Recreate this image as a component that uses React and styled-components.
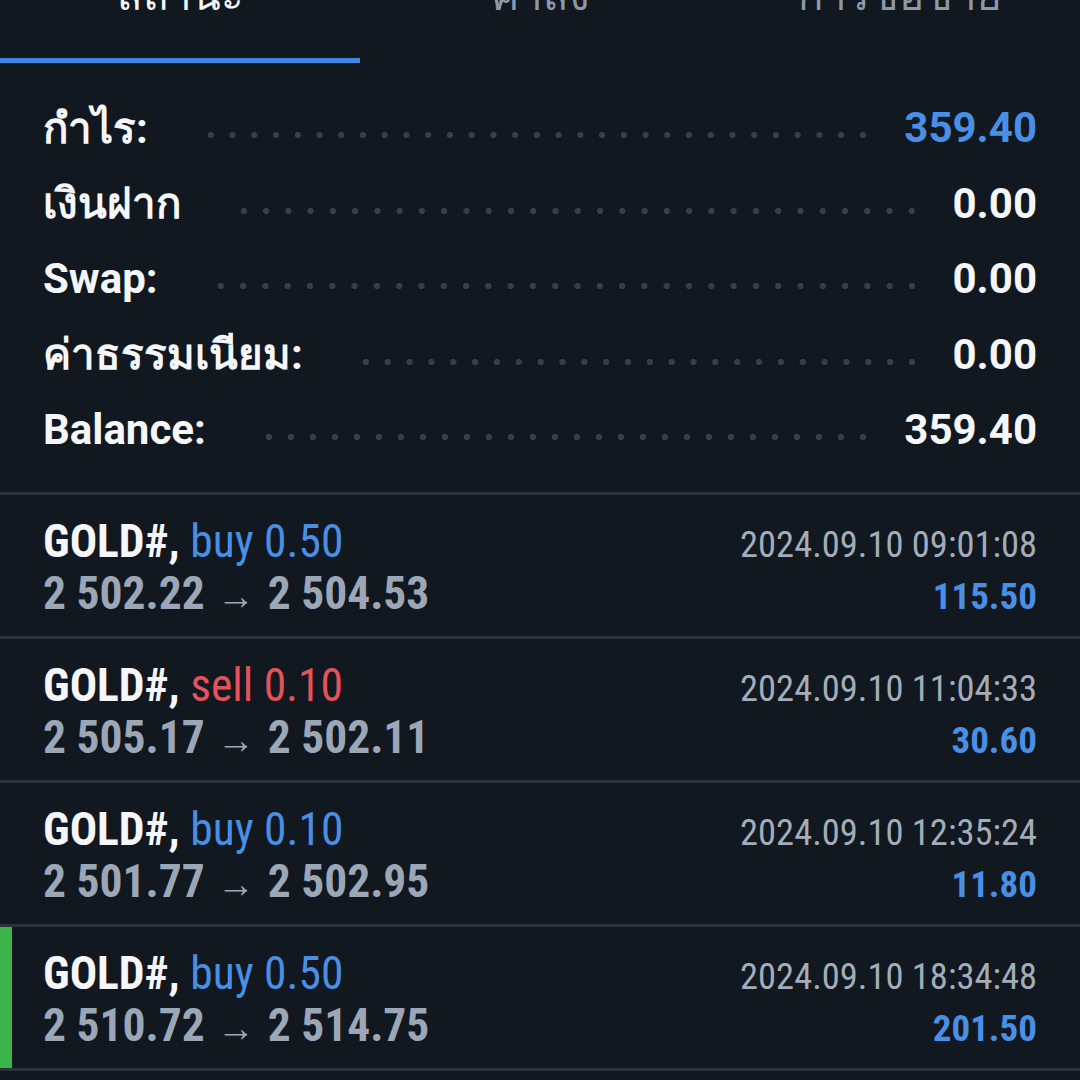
import React from "react";
import styled, { createGlobalStyle, css } from "styled-components";

const GlobalStyle = createGlobalStyle`
  html, body {
    margin: 0;
    padding: 0;
    background: #121820;
    overflow: hidden;
  }
  * { box-sizing: border-box; }
`;

const Screen = styled.div`
  width: 1080px;
  margin-top: -56px;
  background: #121820;
  font-family: Roboto, "Noto Sans", sans-serif;
  color: #f4f6f9;
`;

const TabBar = styled.div`
  display: grid;
  grid-template-columns: repeat(3, 1fr);
  height: 119px;
`;

const Tab = styled.div`
  display: flex;
  justify-content: center;
  align-items: flex-start;
  padding-top: 28px;
  font-size: 42px;
  line-height: 48px;
  font-weight: 500;
  color: ${(p) => (p.$active ? "#f4f6f9" : "#8d98a8")};
  border-bottom: 5px solid ${(p) => (p.$active ? "#3d86e6" : "transparent")};
`;

const Summary = styled.div`
  padding: 27px 43px 24px;
  border-bottom: 3px solid #2b3341;
`;

const SumRow = styled.div`
  display: flex;
  align-items: center;
  height: 75.5px;
  font-size: 42px;
  font-weight: 700;
`;

const Label = styled.span`
  white-space: nowrap;
`;

const Leader = styled.span`
  flex: 1;
  height: 8px;
  margin: 15px 30px 0 52px;
  background-image: radial-gradient(circle, #383f4b 2.8px, transparent 3.4px);
  background-size: 21.7px 8px;
  background-repeat: space no-repeat;
`;

const Value = styled.span`
  color: ${(p) => (p.$accent ? "#4a8fe6" : "#f4f6f9")};
`;

const TradeRow = styled.div`
  padding: 21px 43px 0;
  height: 144px;
  border-bottom: 3px solid #2b3341;
  font-family: "Roboto Condensed", Roboto, sans-serif;
  font-stretch: 75%;
  ${(p) =>
    p.$selected &&
    css`
      box-shadow: inset 12px 0 0 #3bb54a;
    `}
`;

const Line = styled.div`
  display: flex;
  justify-content: space-between;
  align-items: baseline;
  height: 52px;
  line-height: 52px;
`;

const Symbol = styled.span`
  font-size: 45.5px;
  font-weight: 700;
  color: #f4f6f9;
`;

const Side = styled.span`
  font-weight: 400;
  color: ${(p) => (p.$sell ? "#e5525a" : "#4a8fe6")};
`;

const Prices = styled.span`
  font-size: 45.5px;
  font-weight: 700;
  color: #9ba6b6;
`;

const Arrow = styled.span`
  font-weight: 400;
  font-size: 38px;
  margin: 0 13px 0 12px;
`;

const DateText = styled.span`
  font-size: 36.5px;
  font-weight: 400;
  color: #a3acb9;
`;

const Profit = styled.span`
  font-size: 37px;
  font-weight: 700;
  color: #4a8fe6;
`;

const summary = [
  { label: "กำไร:", value: "359.40", accent: true },
  { label: "เงินฝาก", value: "0.00" },
  { label: "Swap:", value: "0.00" },
  { label: "ค่าธรรมเนียม:", value: "0.00" },
  { label: "Balance:", value: "359.40" },
];

const trades = [
  { side: "buy", vol: "0.50", open: "2 502.22", close: "2 504.53", time: "2024.09.10 09:01:08", profit: "115.50" },
  { side: "sell", vol: "0.10", open: "2 505.17", close: "2 502.11", time: "2024.09.10 11:04:33", profit: "30.60" },
  { side: "buy", vol: "0.10", open: "2 501.77", close: "2 502.95", time: "2024.09.10 12:35:24", profit: "11.80" },
  { side: "buy", vol: "0.50", open: "2 510.72", close: "2 514.75", time: "2024.09.10 18:34:48", profit: "201.50", selected: true },
];

export default function App() {
  return (
    <>
      <GlobalStyle />
      <Screen>
        <TabBar>
          <Tab $active>สถานะ</Tab>
          <Tab>คำสั่ง</Tab>
          <Tab>การซื้อขาย</Tab>
        </TabBar>
        <Summary>
          {summary.map((r) => (
            <SumRow key={r.label}>
              <Label>{r.label}</Label>
              <Leader />
              <Value $accent={r.accent}>{r.value}</Value>
            </SumRow>
          ))}
        </Summary>
        {trades.map((t) => (
          <TradeRow key={t.time} $selected={t.selected}>
            <Line>
              <Symbol>
                GOLD#, <Side $sell={t.side === "sell"}>{t.side} {t.vol}</Side>
              </Symbol>
              <DateText>{t.time}</DateText>
            </Line>
            <Line>
              <Prices>
                {t.open}
                <Arrow>→</Arrow>
                {t.close}
              </Prices>
              <Profit>{t.profit}</Profit>
            </Line>
          </TradeRow>
        ))}
      </Screen>
    </>
  );
}
